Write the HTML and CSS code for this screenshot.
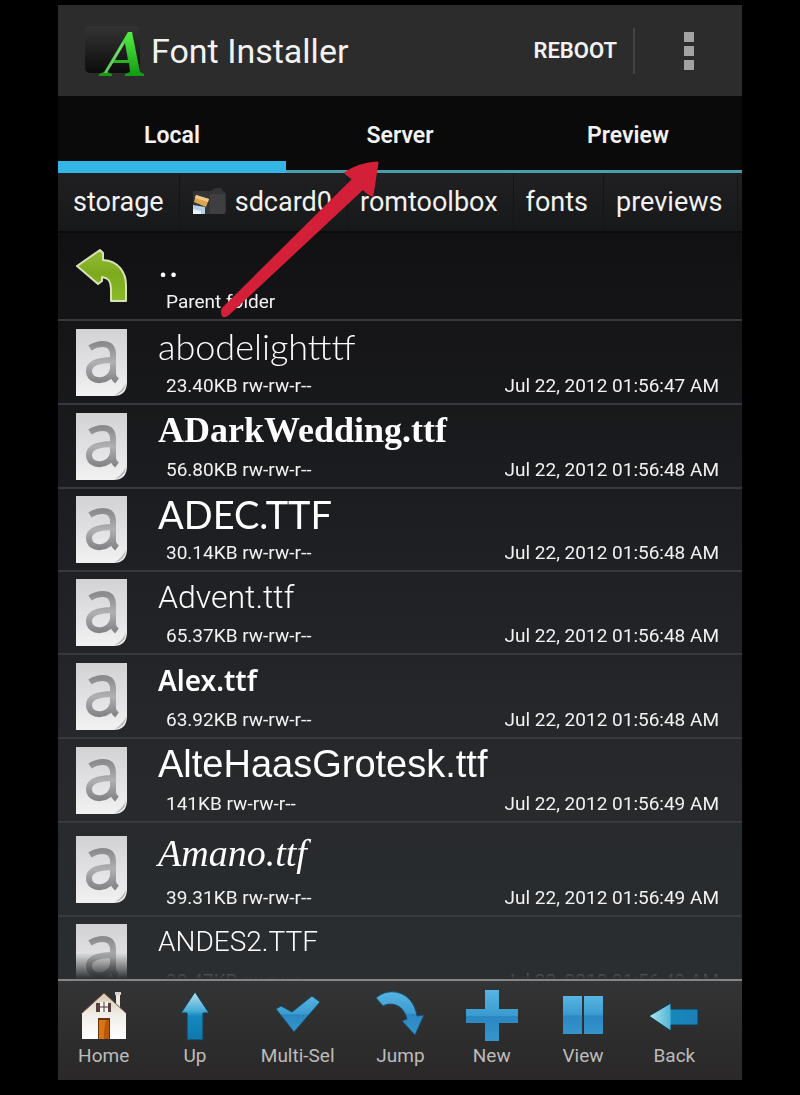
FILE: index.html
```html
<!DOCTYPE html>
<html lang="en">
<head>
<meta charset="utf-8">
<title>Font Installer</title>
<link rel="stylesheet" href="styles.css">
</head>
<body>
<svg class="defs" width="0" height="0" aria-hidden="true">
  <defs>
    <linearGradient id="paper" x1="0" y1="0" x2="0" y2="1"><stop offset="0" stop-color="#d2d2d4"/><stop offset=".6" stop-color="#e4e4e6"/><stop offset="1" stop-color="#f2f2f2"/></linearGradient>
    <linearGradient id="ink" x1="0" y1="0" x2="0" y2="1"><stop offset="0" stop-color="#8b8b8d"/><stop offset=".5" stop-color="#b0b0b2"/><stop offset="1" stop-color="#858587"/></linearGradient>
    <linearGradient id="blue" x1="0" y1="0" x2="0" y2="1"><stop offset="0" stop-color="#58b5e2"/><stop offset=".5" stop-color="#3a9bd0"/><stop offset=".52" stop-color="#2b87c2"/><stop offset="1" stop-color="#3595cb"/></linearGradient>
    <linearGradient id="blueUp" x1="0" y1="0" x2="0" y2="1"><stop offset="0" stop-color="#b9e3ee"/><stop offset=".4" stop-color="#43a9d6"/><stop offset=".5" stop-color="#1489bf"/><stop offset="1" stop-color="#1177ab"/></linearGradient>
    <linearGradient id="blueLeft" x1="0" y1="0" x2="1" y2="0"><stop offset="0" stop-color="#b4e6f0"/><stop offset=".42" stop-color="#55b7d8"/><stop offset=".46" stop-color="#1787ba"/><stop offset="1" stop-color="#1b80b5"/></linearGradient>
    <linearGradient id="green" x1="0" y1="0" x2="0" y2="1"><stop offset="0" stop-color="#90bd35"/><stop offset=".45" stop-color="#7daa1d"/><stop offset="1" stop-color="#8cba2c"/></linearGradient>
    <linearGradient id="logoA" x1="0" y1="0" x2="0" y2="1"><stop offset="0" stop-color="#55ee45"/><stop offset="1" stop-color="#129a12"/></linearGradient>
    <linearGradient id="tile" x1="0" y1="0" x2="0" y2="1"><stop offset="0" stop-color="#343434"/><stop offset=".5" stop-color="#202020"/><stop offset="1" stop-color="#0c0c0c"/></linearGradient>
    <linearGradient id="wall" x1="0" y1="0" x2="0" y2="1"><stop offset="0" stop-color="#d8c9b4"/><stop offset=".5" stop-color="#f1eeea"/><stop offset="1" stop-color="#ffffff"/></linearGradient>
    <symbol id="font-file" viewBox="0 0 51 67">
      <path d="M0 0H51V53Q51 67 37 67H0Z" fill="url(#paper)"/>
      <path d="M39 66Q46 62 50 54Q49 64 39 66Z" fill="#b4b4b6"/>
      <path d="M14 19Q20 15 27 15Q37 15 37 26V45Q37 49 41 52M37 31C27 31 13 32 13 42C13 55 35 54 37 40" fill="none" stroke="url(#ink)" stroke-width="6"/>
    </symbol>
  </defs>
</svg>

<div class="app">
  <header class="bar">
    <svg class="logo" viewBox="0 0 62 58" aria-hidden="true">
      <rect x="1" y="4" width="55" height="47" rx="5" fill="url(#tile)"/>
      <path fill-rule="evenodd" d="M44 10L48 10L56 50L60 52V54H41V52L46 50L45 41H29L23 50L28 52V54H15V52L20 50L38 20ZM41 21L31 38H44Z" fill="url(#logoA)"/>
      <path d="M20 51L38 21L40 22L23 51" fill="#a5d8a0" opacity=".6"/>
    </svg>
    <h1 class="title">Font Installer</h1>
    <button class="reboot" type="button">REBOOT</button>
    <button class="menu" type="button" aria-label="More options"><span class="dot"></span><span class="dot"></span><span class="dot"></span></button>
  </header>

  <nav class="tabs">
    <button class="tab tab-active" type="button">Local</button>
    <button class="tab" type="button">Server</button>
    <button class="tab" type="button">Preview</button>
  </nav>

  <nav class="crumbs" aria-label="Path">
    <a class="crumb" href="#storage">storage</a>
    <a class="crumb" href="#sdcard0">
      <svg class="crumb-icon" viewBox="0 0 34 28" aria-hidden="true"><path d="M1 5Q1 3 3 3H19L23 0H29L31 3Q34 4 34 7V24Q34 26 32 26H1Z" fill="#343436"/><path d="M18 26V6H33V24Q33 26 31 26Z" fill="#3f3f41"/><path d="M1 17L13 19V26H1Z" fill="#b7cee8"/><path d="M1 21L9 23V26H1Z" fill="#e9f2fa"/><path d="M4 7L17 11L14 19L2 14Z" fill="#dca553"/><path d="M4 7L17 11L16 14L3 10Z" fill="#f0c98a"/></svg>
      sdcard0</a>
    <a class="crumb" href="#romtoolbox">romtoolbox</a>
    <a class="crumb" href="#fonts">fonts</a>
    <a class="crumb" href="#previews">previews</a>
  </nav>

  <main class="files">
    <ul class="list">
      <li class="row">
        <svg class="icon" viewBox="0 0 51 67" aria-hidden="true"><path d="M1 23L24 7L27 10V17C43 18 50 30 50 42V58H35V46C35 39 33 35 26 34V38L22 41Z" fill="url(#green)" stroke="#d6e2b8" stroke-width="2" stroke-linejoin="round"/></svg>
        <div class="body"><a class="name name-parent" href="#parent">..</a><div class="meta"><span>Parent folder</span></div></div>
      </li>
      <li class="row">
        <svg class="icon" aria-hidden="true"><use href="#font-file"/></svg>
        <div class="body"><a class="name name-abode" href="#f1">abodelightttf</a><div class="meta"><span>23.40KB rw-rw-r--</span><time>Jul 22, 2012 01:56:47 AM</time></div></div>
      </li>
      <li class="row">
        <svg class="icon" aria-hidden="true"><use href="#font-file"/></svg>
        <div class="body"><a class="name name-wedding" href="#f2">ADarkWedding.ttf</a><div class="meta"><span>56.80KB rw-rw-r--</span><time>Jul 22, 2012 01:56:48 AM</time></div></div>
      </li>
      <li class="row">
        <svg class="icon" aria-hidden="true"><use href="#font-file"/></svg>
        <div class="body"><a class="name name-adec" href="#f3">ADEC.TTF</a><div class="meta"><span>30.14KB rw-rw-r--</span><time>Jul 22, 2012 01:56:48 AM</time></div></div>
      </li>
      <li class="row">
        <svg class="icon" aria-hidden="true"><use href="#font-file"/></svg>
        <div class="body"><a class="name name-advent" href="#f4">Advent.ttf</a><div class="meta"><span>65.37KB rw-rw-r--</span><time>Jul 22, 2012 01:56:48 AM</time></div></div>
      </li>
      <li class="row">
        <svg class="icon" aria-hidden="true"><use href="#font-file"/></svg>
        <div class="body"><a class="name name-alex" href="#f5">Alex.ttf</a><div class="meta"><span>63.92KB rw-rw-r--</span><time>Jul 22, 2012 01:56:48 AM</time></div></div>
      </li>
      <li class="row">
        <svg class="icon" aria-hidden="true"><use href="#font-file"/></svg>
        <div class="body"><a class="name name-haas" href="#f6">AlteHaasGrotesk.ttf</a><div class="meta"><span>141KB rw-rw-r--</span><time>Jul 22, 2012 01:56:49 AM</time></div></div>
      </li>
      <li class="row">
        <svg class="icon" aria-hidden="true"><use href="#font-file"/></svg>
        <div class="body"><a class="name name-amano" href="#f7">Amano.ttf</a><div class="meta"><span>39.31KB rw-rw-r--</span><time>Jul 22, 2012 01:56:49 AM</time></div></div>
      </li>
      <li class="row">
        <svg class="icon" aria-hidden="true"><use href="#font-file"/></svg>
        <div class="body"><a class="name name-andes" href="#f8">ANDES2.TTF</a><div class="meta"><span>38.47KB rw-rw-r--</span><time>Jul 22, 2012 01:56:49 AM</time></div></div>
      </li>
    </ul>
  </main>

  <footer class="tools">
    <button class="tool" type="button">
      <svg class="tool-icon" viewBox="0 0 52 52" aria-hidden="true"><path d="M38 4H42V20L38 17Z" fill="#eee9e4"/><path d="M37 3H43V6H37Z" fill="#d9d3cc"/><path d="M26 4L48 24V50H4V24Z" fill="url(#wall)"/><path d="M26 4L3 25M26 4L48 24" stroke="#6e5138" stroke-width="1" fill="none"/><rect x="18" y="14" width="15" height="9" fill="#583f3c"/><rect x="22" y="13" width="8" height="10" fill="#f7f4f2"/><path d="M26 13V23M22 18H30" stroke="#4b3432" stroke-width="1"/><path d="M20 29H32V50H20Z" fill="#6a350e"/><path d="M21 31H31V50H21Z" fill="#d97416"/><path d="M28 31H31V50H26V42Z" fill="#b8560c"/></svg>
      Home</button>
    <button class="tool" type="button">
      <svg class="tool-icon" viewBox="0 0 52 52" aria-hidden="true"><path d="M26 3L40 24H34V51H18V24H12Z" fill="url(#blueUp)" stroke="#173c4d" stroke-width="1"/></svg>
      Up</button>
    <button class="tool tool-wide" type="button">
      <svg class="tool-icon" viewBox="0 0 52 52" aria-hidden="true"><path d="M4 20L9 17L20 23L40 7L48 13L22 43Z" fill="url(#blue)" stroke="#174d66" stroke-width="1"/></svg>
      Multi-Sel</button>
    <button class="tool" type="button">
      <svg class="tool-icon" viewBox="0 0 52 52" aria-hidden="true"><path d="M2 9C15-3 39 2 43 27L50 26L41 46L28 32L33 30C30 17 19 12 9 17Z" fill="url(#blue)" stroke="#1a4f70" stroke-width="1"/></svg>
      Jump</button>
    <button class="tool" type="button">
      <svg class="tool-icon" viewBox="0 0 52 52" aria-hidden="true"><path d="M19 1H33V20H52V34H33V52H19V34H0V20H19Z" fill="url(#blue)"/></svg>
      New</button>
    <button class="tool" type="button">
      <svg class="tool-icon" viewBox="0 0 52 52" aria-hidden="true"><path d="M6 7H25V45H6ZM27 7H46V45H27Z" fill="url(#blue)"/></svg>
      View</button>
    <button class="tool" type="button">
      <svg class="tool-icon" viewBox="0 0 52 52" aria-hidden="true"><path d="M1 27L23 14V20H50V36H23V42Z" fill="url(#blueLeft)" stroke="#123c50" stroke-width="1"/></svg>
      Back</button>
  </footer>

  <svg class="pointer" viewBox="0 0 170 164" aria-hidden="true"><path d="M161 5L156 37L151 34L147 30L12 156Q5 161 7 151L138 21L130 15Q144 6 161 5Z" fill="#d41f38" stroke="#d41f38" stroke-width="3" stroke-linejoin="round"/></svg>
</div>
</body>
</html>
```
FILE: styles.css
```css
* { box-sizing: border-box; }

body {
  margin: 0;
  min-height: 100vh;
  padding: 5px 58px 15px;
  background: #000;
  color: #f2f2f2;
  font-family: Roboto, "Noto Sans", sans-serif;
}

button {
  border: 0;
  padding: 0;
  background: none;
  color: inherit;
  font: inherit;
}

a { color: inherit; text-decoration: none; }

.defs { position: absolute; }

.app {
  position: relative;
  display: flex;
  flex-direction: column;
  height: calc(100vh - 20px);
}

/* Title bar */
.bar {
  display: flex;
  align-items: center;
  flex: none;
  height: 91px;
  padding-left: 26px;
  background: #2c2c2c;
}

.logo { width: 62px; height: 58px; }

.title {
  flex: 1;
  margin: 0 0 0 5px;
  font-size: 34px;
  font-weight: 400;
  line-height: 48px;
}

.reboot {
  height: 46px;
  padding-right: 16px;
  border-right: 2px solid #444;
  font-size: 22px;
  font-weight: 600;
}

.menu {
  display: flex;
  flex-direction: column;
  align-items: center;
  gap: 4px;
  width: 107px;
}

.dot { width: 10px; height: 10px; background: #a2a2a2; }

/* Tabs */
.tabs {
  display: flex;
  flex: none;
  height: 77px;
  background: #0a0a0a;
  border-bottom: 3px solid #4a9fae;
}

.tab {
  flex: 1;
  height: 77px;
  padding-top: 14px;
  border-bottom: 12px solid transparent;
  font-size: 23px;
  font-weight: 600;
}

.tab-active { border-bottom-color: #33b5e5; }

/* Path */
.crumbs {
  display: flex;
  flex: none;
  height: 60px;
  padding-left: 15px;
  background: linear-gradient(#202022, #171819);
  border-bottom: 2px solid #0b0b0c;
  font-size: 27px;
}

.crumb {
  display: flex;
  align-items: center;
  gap: 9px;
  margin-right: 12px;
  padding-right: 15px;
  border-right: 1px solid #151517;
}

.crumb-icon { width: 34px; height: 28px; }

/* File list */
.files {
  flex: 1;
  min-height: 0;
  background: linear-gradient(#111113, #1c1d20 35%, #26272a 65%, #2a2e30);
}

.list {
  height: 100%;
  margin: 0;
  padding: 0;
  overflow: hidden;
  list-style: none;
  mask-image: linear-gradient(#000 calc(100% - 26px), transparent);
}

.row {
  display: flex;
  align-items: center;
  gap: 31px;
  padding: 0 23px 0 18px;
  border-bottom: 2px solid #38393c;
}

.icon { flex: none; width: 51px; height: 67px; }

.body { flex: 1; padding-bottom: 3px; }

.name {
  display: block;
  color: #fff;
  font-size: 36px;
  line-height: 50px;
  white-space: nowrap;
}

.meta {
  display: flex;
  justify-content: space-between;
  padding-left: 8px;
  font-size: 19px;
  line-height: 28px;
}

.name-parent { padding-top: 7px; font-size: 40px; line-height: 48px; }
.name-abode { font-family: Lato, sans-serif; font-weight: 300; line-height: 51px; }
.name-wedding { font-family: "Liberation Serif", serif; font-weight: 700; line-height: 51px; }
.name-adec { font-family: Lato, sans-serif; font-size: 38px; }
.name-advent { font-family: Roboto, sans-serif; font-weight: 300; font-size: 32px; }
.name-alex { font-family: "Noto Sans", sans-serif; font-weight: 600; font-size: 28px; line-height: 51px; }
.name-haas { font-family: "Liberation Sans", sans-serif; font-size: 38px; line-height: 51px; }
.name-amano { font-family: "Liberation Serif", serif; font-style: italic; font-size: 38px; line-height: 61px; }
.name-andes { font-family: Roboto, sans-serif; font-weight: 300; font-size: 28px; }

/* Toolbar */
.tools {
  display: flex;
  flex: none;
  height: 101px;
  padding-right: 22px;
  border-top: 2px solid #858585;
  background: linear-gradient(#333435, #2a2828);
}

.tool {
  display: flex;
  flex: 4;
  flex-direction: column;
  align-items: center;
  padding-top: 8px;
  color: #bcbcbc;
  font-size: 19px;
  line-height: 30px;
}

.tool-wide { flex: 5; }

.tool-icon { width: 52px; height: 52px; }

/* Annotation arrow over the tabs and list */
.pointer {
  position: absolute;
  left: 158px;
  top: 153px;
  width: 170px;
  height: 164px;
  pointer-events: none;
}
```
